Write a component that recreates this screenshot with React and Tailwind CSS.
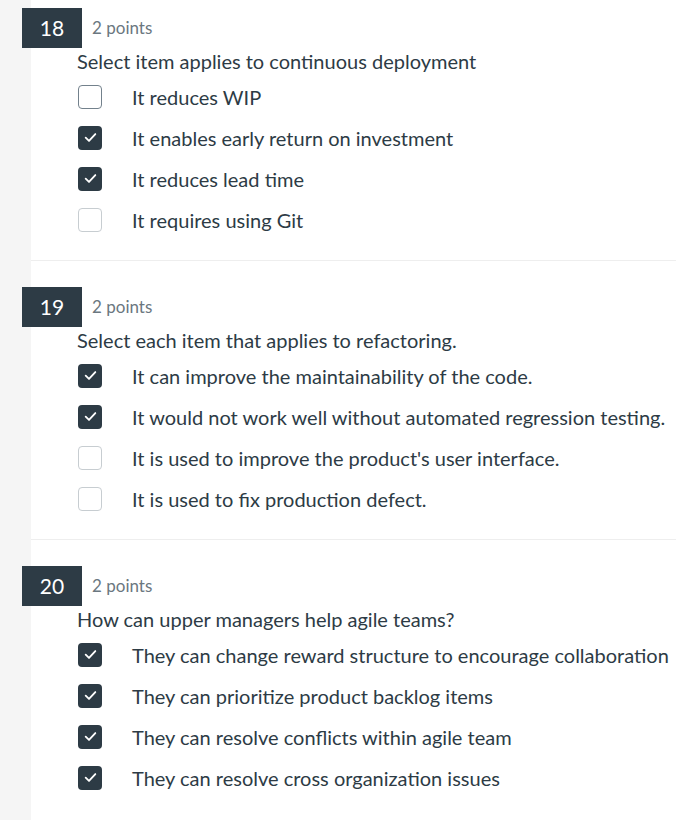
import React from 'react';

const questions = [
  {
    num: 18,
    first: true,
    text: 'Select item applies to continuous deployment',
    options: [
      { label: 'It reduces WIP', checked: false, focus: true },
      { label: 'It enables early return on investment', checked: true },
      { label: 'It reduces lead time', checked: true },
      { label: 'It requires using Git', checked: false },
    ],
  },
  {
    num: 19,
    text: 'Select each item that applies to refactoring.',
    options: [
      { label: 'It can improve the maintainability of the code.', checked: true },
      { label: 'It would not work well without automated regression testing.', checked: true },
      { label: "It is used to improve the product's user interface.", checked: false },
      { label: 'It is used to fix production defect.', checked: false },
    ],
  },
  {
    num: 20,
    last: true,
    text: 'How can upper managers help agile teams?',
    options: [
      { label: 'They can change reward structure to encourage collaboration', checked: true },
      { label: 'They can prioritize product backlog items', checked: true },
      { label: 'They can resolve conflicts within agile team', checked: true },
      { label: 'They can resolve cross organization issues', checked: true },
    ],
  },
];

function Checkbox({ checked, focus }) {
  if (checked) {
    return (
      <span className="flex h-[24px] w-[24px] items-center justify-center rounded-[4px] bg-[#2d3b45]">
        <svg width="15" height="15" viewBox="0 0 14 14" fill="none">
          <path d="M2.5 7.2 L5.6 10.2 L11.5 3.8" stroke="white" strokeWidth="1.7" strokeLinecap="round" strokeLinejoin="round" />
        </svg>
      </span>
    );
  }
  return (
    <span
      className={`block h-[24px] w-[24px] rounded-[4px] border bg-white ${focus ? 'border-[#73818c]' : 'border-[#c7cdd1]'}`}
    />
  );
}

function Question({ q }) {
  return (
    <div className={`${q.first ? 'pt-[8px]' : 'pt-[26px]'} ${q.last ? '' : 'border-b border-[#eeeeee] pb-[20px]'}`}>
      <div className="flex items-center">
        <div className="-ml-[9px] flex h-[40px] w-[60px] items-center justify-center bg-[#2d3b45] text-[21px] text-white">
          {q.num}
        </div>
        <span className="ml-[10px] text-[17px] text-[#6b7780]">2 points</span>
      </div>
      <div className="ml-[46px] text-[20px] leading-[26px] text-[#2d3b45]">{q.text}</div>
      <div className="mt-[2px]">
        {q.options.map((o) => (
          <div key={o.label} className="flex h-[41px] items-center">
            <div className="ml-[47px] w-[54px]">
              <Checkbox checked={o.checked} focus={o.focus} />
            </div>
            <span className="whitespace-nowrap text-[20px] text-[#2d3b45]">{o.label}</span>
          </div>
        ))}
      </div>
    </div>
  );
}

export default function App() {
  return (
    <div className="flex h-[820px] w-[676px] overflow-hidden bg-white" style={{ fontFamily: 'Lato, "Noto Sans", sans-serif' }}>
      <div className="w-[31px] shrink-0 bg-[#f5f5f5]" />
      <div className="flex-1">
        {questions.map((q) => (
          <Question key={q.num} q={q} />
        ))}
      </div>
    </div>
  );
}
